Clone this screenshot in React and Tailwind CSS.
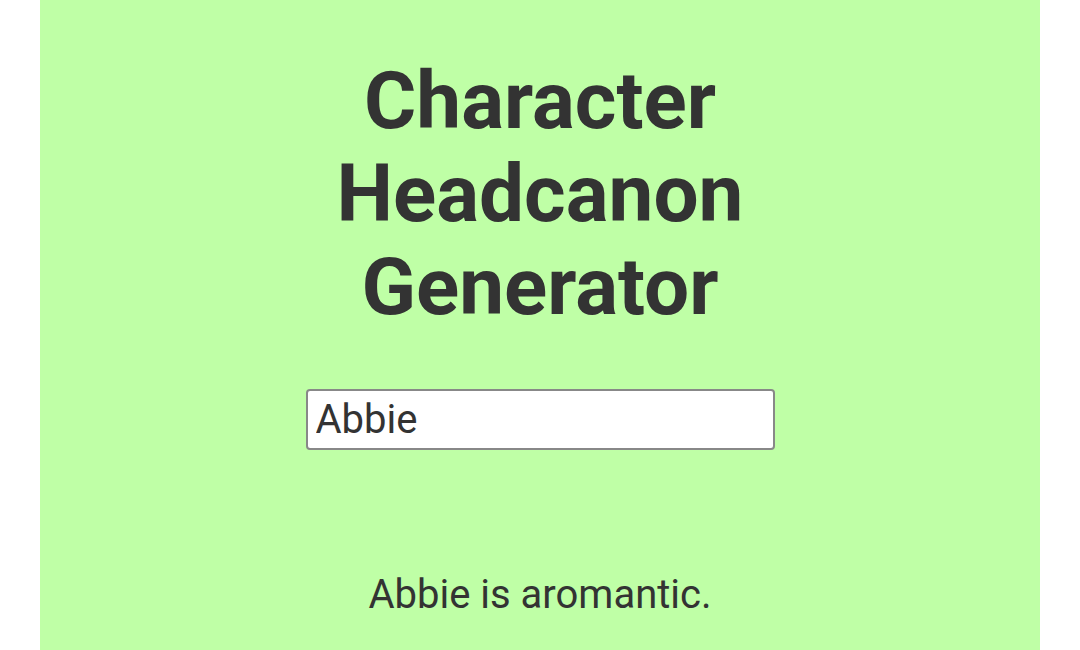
export default function App() {
  return (
    <div className="min-h-screen bg-white" style={{ fontFamily: "Roboto, sans-serif" }}>
      <div className="mx-10 h-[650px] overflow-hidden bg-[#bfffa6] text-[#333333] flex flex-col items-center">
        <h1 className="mt-[55px] text-center text-[80px] font-bold leading-[93px] w-[500px]">
          Character Headcanon Generator
        </h1>
        <input
          type="text"
          defaultValue="Abbie"
          className="mt-[55px] h-[61px] w-[469px] rounded-[4px] border-2 border-[#888888] bg-white px-[8px] text-[40px] text-[#333333] outline-none"
        />
        <p className="mt-[115px] text-[40px]">Abbie is aromantic.</p>
      </div>
    </div>
  );
}
